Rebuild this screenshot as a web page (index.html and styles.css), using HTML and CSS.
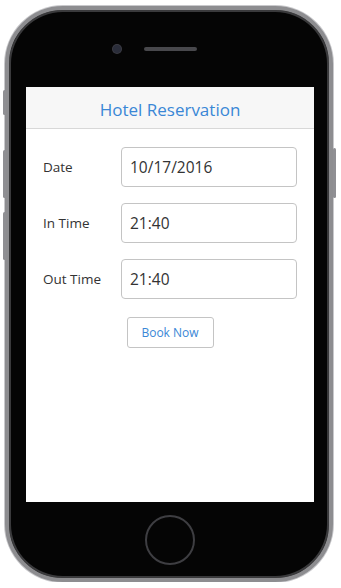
FILE: index.html
```html
<!DOCTYPE html>
<html lang="en">
<head>
    <meta charset="UTF-8">
    <meta name="viewport" content="width=device-width, initial-scale=1.0">
    <title>Hotel Reservation</title>
    <link rel="stylesheet" href="styles.css">
</head>
<body>
    <div class="phone">
        <span class="side-btn mute"></span>
        <span class="side-btn vol-up"></span>
        <span class="side-btn vol-down"></span>
        <span class="side-btn power"></span>

        <div class="phone-top">
            <span class="camera"></span>
            <span class="speaker"></span>
            <span></span>
        </div>

        <div class="screen">
            <div class="app-header">Hotel Reservation</div>
            <form class="booking-form">
                <label for="date">Date</label>
                <input type="text" id="date" value="10/17/2016">
                <label for="inTime">In Time</label>
                <input type="text" id="inTime" value="21:40">
                <label for="outTime">Out Time</label>
                <input type="text" id="outTime" value="21:40">
                <div class="form-actions">
                    <button type="button">Book Now</button>
                </div>
            </form>
        </div>

        <div class="phone-bottom">
            <span class="home-btn"></span>
        </div>
    </div>
</body>
</html>
```

FILE: styles.css
```css
body {
    margin: 0;
    padding: 0;
    background-color: #ffffff;
    font-family: "Open Sans", "Noto Sans", sans-serif;
}
.phone {
    position: relative;
    box-sizing: border-box;
    width: 328px;
    height: 576px;
    margin: 6px 0 0 5px;
    padding: 0 15px 0 17px;
    border: 4px solid #8d8d90;
    border-radius: 58px;
    background-color: #050505;
    box-shadow: inset 0 0 0 2px #3a3a3c, 0 0 0 1px #c9c9cc;
    display: flex;
    flex-direction: column;
}
.side-btn {
    position: absolute;
    width: 3px;
    background-color: #8f8f93;
    border-radius: 2px;
}
.mute { left: -6px; top: 80px; height: 25px; }
.vol-up { left: -6px; top: 140px; height: 48px; }
.vol-down { left: -6px; top: 202px; height: 48px; }
.power { right: -7px; top: 138px; height: 50px; }
.phone-top {
    height: 77px;
    display: grid;
    grid-template-columns: 1fr auto 1fr;
    align-items: center;
}
.camera {
    justify-self: end;
    margin-right: 23px;
    width: 8px;
    height: 8px;
    border-radius: 50%;
    background-color: #2a2d3a;
    box-shadow: 0 0 0 1px #3c3c44;
}
.speaker {
    width: 53px;
    height: 4px;
    border-radius: 2px;
    background-color: #48484c;
}
.screen {
    height: 415px;
    background-color: #ffffff;
    display: flex;
    flex-direction: column;
}
.app-header {
    box-sizing: border-box;
    height: 42px;
    padding-top: 3px;
    background-color: #f7f7f7;
    border-bottom: 1px solid #d8d8d8;
    display: flex;
    justify-content: center;
    align-items: center;
    color: #3a87d6;
    font-size: 17px;
}
.booking-form {
    padding: 18px 17px 0;
    display: grid;
    grid-template-columns: 78px 1fr;
    grid-auto-rows: 40px;
    row-gap: 16px;
    align-items: center;
}
.booking-form label {
    color: #333333;
    font-size: 13.5px;
}
.booking-form input {
    box-sizing: border-box;
    height: 40px;
    width: 100%;
    padding: 0 8px;
    border: 1px solid #c4c4c4;
    border-radius: 4px;
    color: #333333;
    font-family: inherit;
    font-size: 15.5px;
}
.form-actions {
    grid-column: 1 / -1;
    align-self: start;
    display: flex;
    justify-content: center;
    margin-top: 2px;
}
.form-actions button {
    width: 87px;
    height: 31px;
    background-color: #ffffff;
    border: 1px solid #c4c4c4;
    border-radius: 3px;
    color: #3a87d6;
    font-family: inherit;
    font-size: 12px;
    cursor: pointer;
}
.phone-bottom {
    flex: 1;
    display: flex;
    justify-content: center;
    align-items: center;
}
.home-btn {
    box-sizing: border-box;
    width: 50px;
    height: 50px;
    border-radius: 50%;
    border: 2px solid #3e3e42;
}
```
